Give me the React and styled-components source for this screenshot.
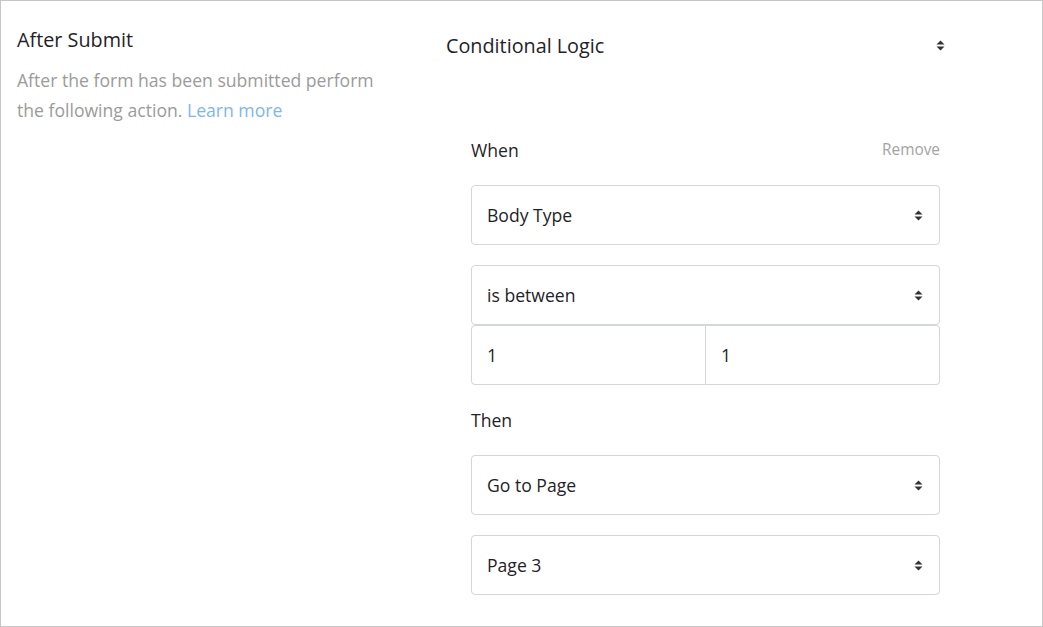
import React from "react";
import styled, { createGlobalStyle } from "styled-components";

const Global = createGlobalStyle`
  html, body { margin: 0; padding: 0; background: #fff; }
  body { font-family: "Open Sans", "Liberation Sans", sans-serif; color: #1f2329; }
  * { box-sizing: border-box; }
`;

const Frame = styled.div`
  width: 1043px;
  height: 627px;
  border: 1px solid #c6c6c6;
  display: grid;
  grid-template-columns: 429px 499px;
  padding-left: 16px;
`;

const LeftCol = styled.div`
  padding-top: 25px;
  padding-right: 50px;
`;

const Title = styled.h2`
  margin: 0;
  font-size: 19.8px;
  font-weight: 400;
  line-height: 27px;
  color: #1f2329;
`;

const Description = styled.p`
  margin: 12px 0 0;
  font-size: 17.6px;
  line-height: 30px;
  color: #9b9b9b;
`;

const Link = styled.a`
  color: #7db7ef;
  text-decoration: none;
`;

const RightCol = styled.div`
  padding-top: 31px;
  display: flex;
  flex-direction: column;
`;

const HeaderRow = styled.div`
  display: flex;
  align-items: center;
  justify-content: space-between;
  height: 27px;
`;

const Rules = styled.div`
  padding: 0 5px 0 25px;
  display: flex;
  flex-direction: column;
`;

const LabelRow = styled.div`
  display: flex;
  align-items: center;
  justify-content: space-between;
  height: 24px;
  margin-top: ${(p) => p.$top}px;
  margin-bottom: 23px;
`;

const Label = styled.span`
  font-size: 17.6px;
  line-height: 24px;
  color: #1f2329;
`;

const Remove = styled.span`
  font-size: 15.4px;
  line-height: 24px;
  color: #a3a3a3;
`;

const SelectBox = styled.div`
  height: 60px;
  border: 1px solid #d3d6dc;
  border-radius: 4px;
  display: flex;
  align-items: center;
  justify-content: space-between;
  padding: 0 16px 0 15px;
  font-size: 17.6px;
  color: #1f2329;
  margin-bottom: ${(p) => p.$gap || 0}px;
`;

const InputGroup = styled.div`
  display: flex;
  height: 60px;
`;

const InputCell = styled.div`
  flex: 1;
  display: flex;
  align-items: center;
  padding-left: 15px;
  font-size: 17.6px;
  color: #1f2329;
  border: 1px solid #d3d6dc;
  border-radius: ${(p) => (p.$first ? "4px 0 0 4px" : "0 4px 4px 0")};
  ${(p) => (p.$first ? "" : "border-left: none;")}
`;

const Sort = ({ color = "#333" }) => (
  <svg width="9" height="11" viewBox="0 0 9 11" aria-hidden="true">
    <path d="M0.5 4.5 L4.5 0.5 L8.5 4.5 Z" fill={color} />
    <path d="M0.5 6.5 L4.5 10.5 L8.5 6.5 Z" fill={color} />
  </svg>
);

export default function App() {
  return (
    <>
      <Global />
      <Frame>
        <LeftCol>
          <Title>After Submit</Title>
          <Description>
            After the form has been submitted perform the following action.{" "}
            <Link href="#">Learn more</Link>
          </Description>
        </LeftCol>
        <RightCol>
          <HeaderRow>
            <Title>Conditional Logic</Title>
            <Sort />
          </HeaderRow>
          <Rules>
            <LabelRow $top={79}>
              <Label>When</Label>
              <Remove>Remove</Remove>
            </LabelRow>
            <SelectBox $gap={20}>
              Body Type
              <Sort />
            </SelectBox>
            <SelectBox>
              is between
              <Sort />
            </SelectBox>
            <InputGroup>
              <InputCell $first>1</InputCell>
              <InputCell>1</InputCell>
            </InputGroup>
            <LabelRow $top={23}>
              <Label>Then</Label>
            </LabelRow>
            <SelectBox $gap={20}>
              Go to Page
              <Sort />
            </SelectBox>
            <SelectBox>
              Page 3
              <Sort />
            </SelectBox>
          </Rules>
        </RightCol>
      </Frame>
    </>
  );
}
